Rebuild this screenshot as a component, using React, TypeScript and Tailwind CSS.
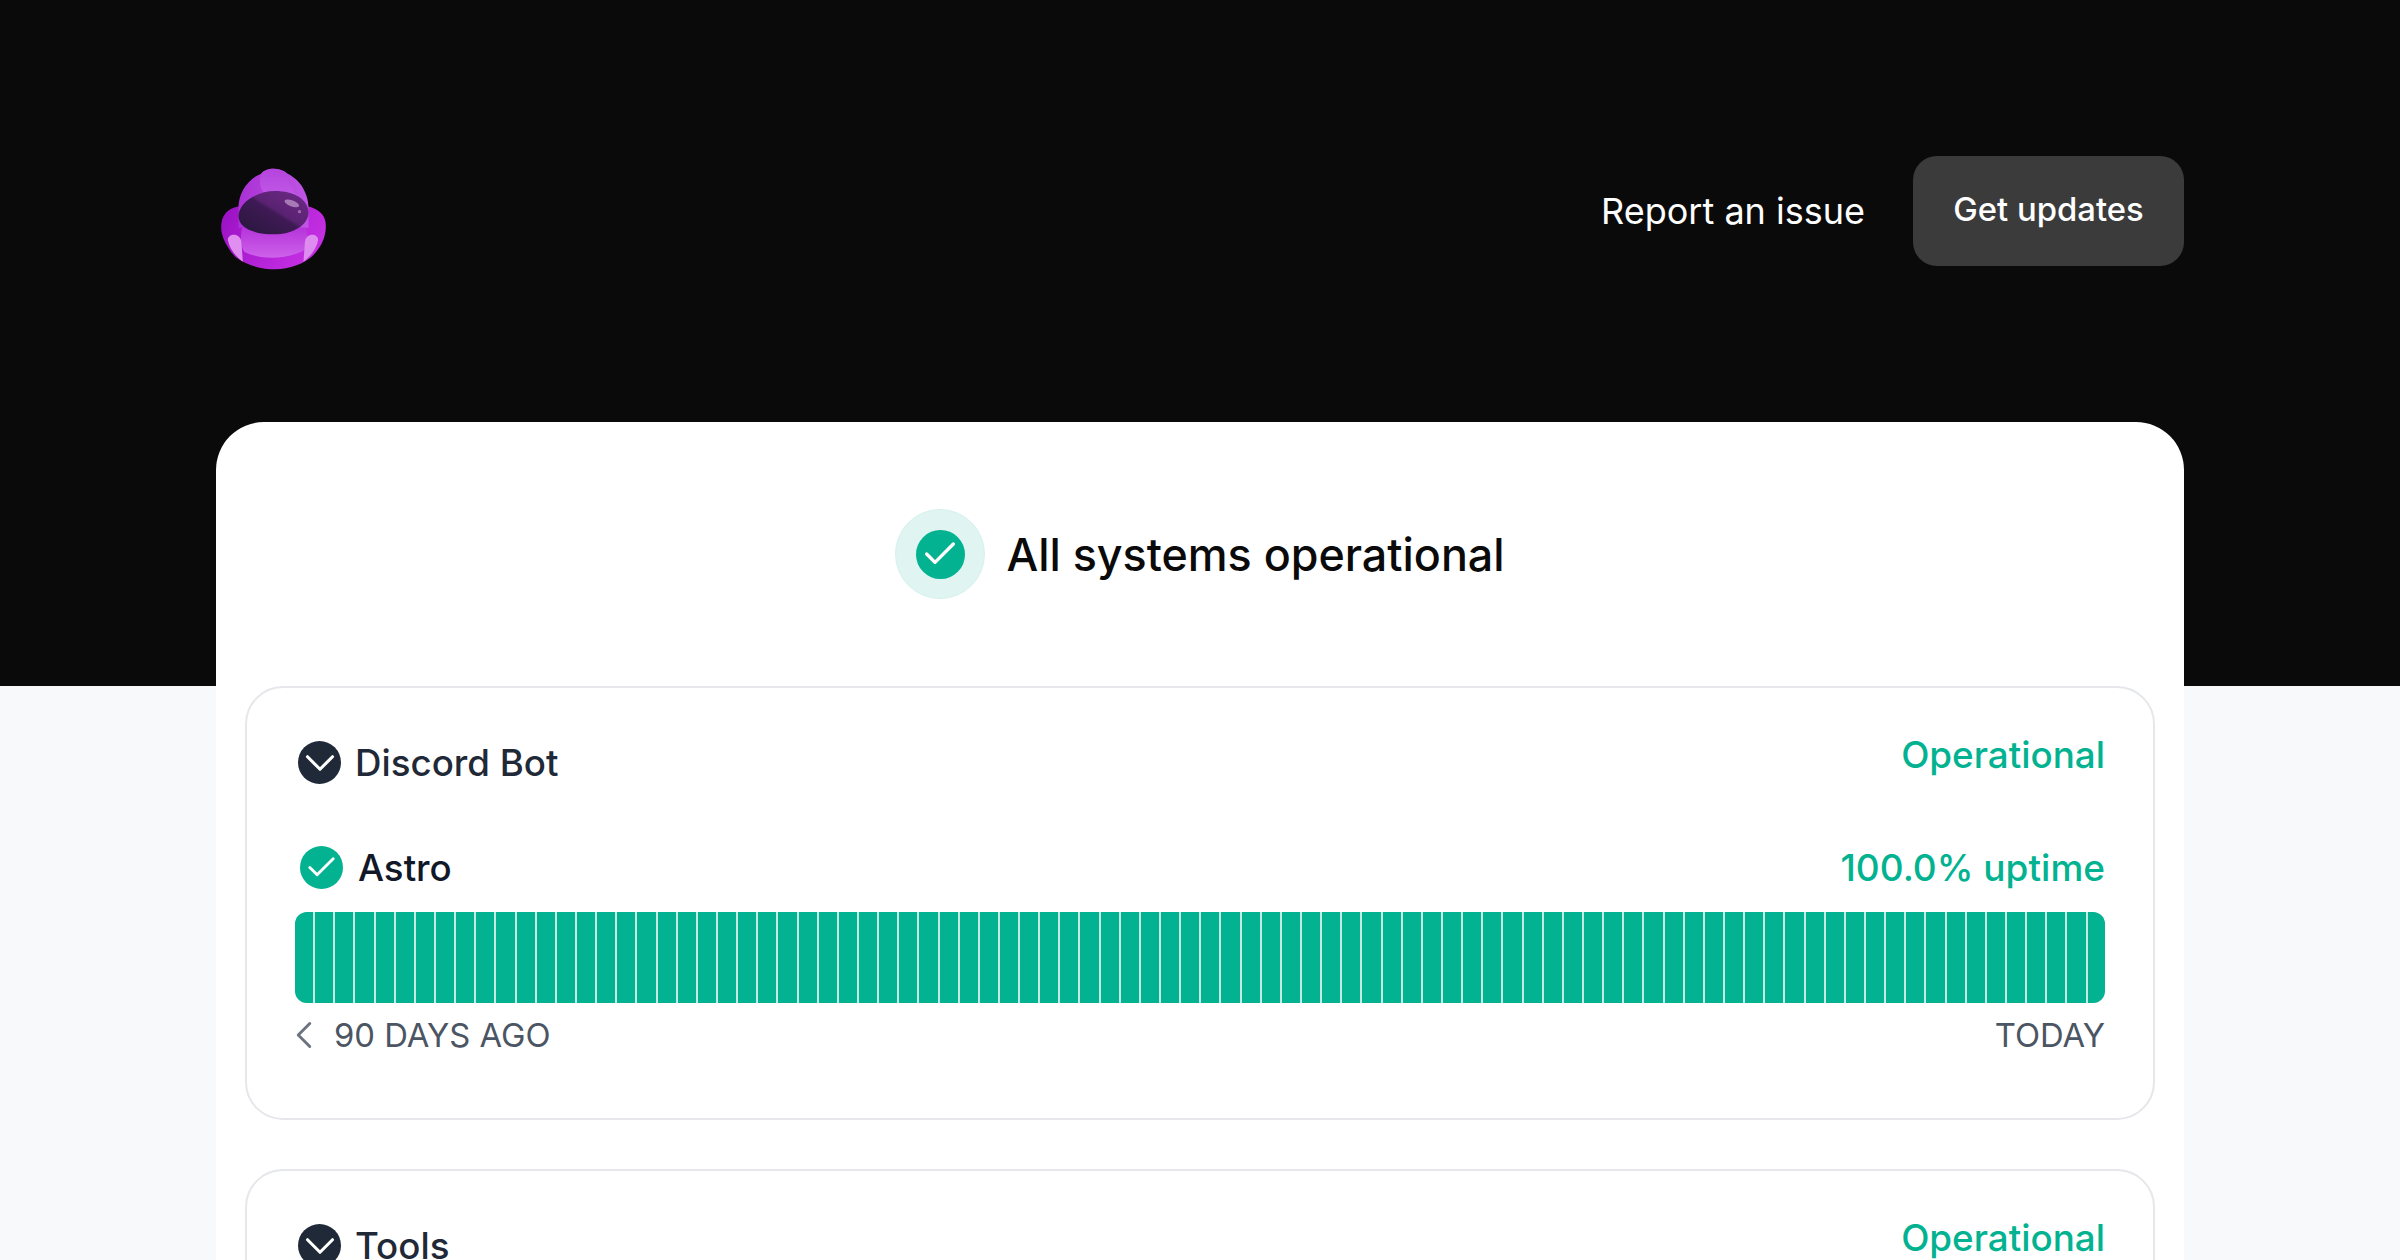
import { Check, ChevronDown, ChevronLeft } from "lucide-react";

const days = Array.from({ length: 90 }, (_, i) => i);

function Logo() {
  return (
    <svg width="107" height="105" viewBox="120 105 320 315" className="mt-[10px] ml-[4px]">
      <defs>
        <linearGradient id="body" x1="0" y1="0" x2="1" y2="0.4">
          <stop offset="0" stopColor="#9a10c4" />
          <stop offset="1" stopColor="#c52fe2" />
        </linearGradient>
        <linearGradient id="dome" x1="0" y1="0" x2="1" y2="0.1">
          <stop offset="0" stopColor="#a92fd4" />
          <stop offset="1" stopColor="#bf55e4" />
        </linearGradient>
        <linearGradient id="band" x1="0" y1="0" x2="0" y2="1">
          <stop offset="0" stopColor="#b534da" />
          <stop offset="1" stopColor="#cd62ea" />
        </linearGradient>
        <linearGradient id="visor" x1="0" y1="1" x2="1" y2="0">
          <stop offset="0" stopColor="#27163b" />
          <stop offset="0.5" stopColor="#3f1a55" />
          <stop offset="0.55" stopColor="#5a2272" />
          <stop offset="1" stopColor="#6e2a88" />
        </linearGradient>
        <linearGradient id="crown" x1="0" y1="0" x2="0" y2="1">
          <stop offset="0" stopColor="#b544de" />
          <stop offset="1" stopColor="#c058e6" />
        </linearGradient>
      </defs>
      <path d="M178 226C140 232 123 255 123 290C123 315 140 350 165 377C200 405 250 415 285 415C330 415 385 395 410 360C430 335 437 310 437 285C437 255 420 235 382 226Z" fill="url(#body)" />
      <path d="M175 240C172 190 200 145 243 128C258 108 300 108 322 128C360 145 388 190 385 240L385 290L175 290Z" fill="url(#dome)" />
      <path d="M243 128C258 108 300 108 322 128C322 150 335 175 352 195L252 186C240 170 236 150 243 128Z" fill="url(#crown)" />
      <path d="M186 290C178 320 184 350 192 362C240 388 325 385 372 358C386 335 385 310 376 290Z" fill="url(#band)" />
      <path d="M175 255C175 215 230 180 285 180C340 180 385 205 385 245C385 280 340 310 280 310C220 310 175 290 175 255Z" fill="url(#visor)" />
      <ellipse cx="335" cy="217" rx="23" ry="9" transform="rotate(20 335 217)" fill="#a87ab5" />
      <circle cx="358" cy="242" r="5" fill="#9a6aa8" />
      <path d="M143 328C143 305 182 305 184 335L188 392C165 376 148 352 143 328Z" fill="#e08ff0" />
      <path d="M414 328C414 305 376 305 374 335L370 392C392 376 409 352 414 328Z" fill="#de8cef" />
    </svg>
  );
}

function GroupHeader({ name }: { name: string }) {
  return (
    <div className="flex justify-between items-start">
      <div className="flex items-center gap-[14px] ml-[3px] mt-[5px]">
        <span className="w-[43px] h-[43px] rounded-full bg-[#1f2937] flex items-center justify-center shrink-0">
          <ChevronDown className="w-[50px] h-[50px] shrink-0 text-white" strokeWidth={1.5} />
        </span>
        <span className="text-[36.7px] leading-[43px] font-medium text-[#1f2937]">{name}</span>
      </div>
      <span className="text-[36.8px] leading-[43px] -mt-[3px] font-medium text-[#02b290]">Operational</span>
    </div>
  );
}

export default function App() {
  return (
    <div className="h-[1260px] overflow-hidden bg-[#f8f9fb] font-['Inter',sans-serif]">
      {/* Header */}
      <header className="h-[686px] bg-[#0a0a0a] px-[216px] pt-[156px]">
        <div className="flex justify-between items-start">
          <Logo />
          <div className="flex items-center gap-[48px]">
            <a className="text-[36px] text-white">Report an issue</a>
            <button className="h-[110px] w-[271px] rounded-[24px] bg-[#3b3b3b] text-white text-[32.8px] font-medium pb-[2px]">
              Get updates
            </button>
          </div>
        </div>
      </header>

      {/* Card */}
      <main className="mx-[216px] -mt-[264px] relative bg-white rounded-t-[48px] px-[29px] pt-[87px]">
        <div className="flex items-center justify-center gap-[21px]">
          <span className="w-[90px] h-[90px] rounded-full bg-[#e0f5f1] border border-[#d5f1ec] flex items-center justify-center">
            <span className="w-[49px] h-[49px] rounded-full bg-[#02b290] flex items-center justify-center">
              <Check className="w-[40px] h-[40px] shrink-0 text-white" strokeWidth={2} />
            </span>
          </span>
          <h1 className="text-[44.8px] font-medium text-[#0a0a0a] mt-[3px]">All systems operational</h1>
        </div>

        <section className="mt-[87px] h-[434px] border-2 border-[#e5e7eb] rounded-[38px] px-[48px] pt-[48px]">
          <GroupHeader name="Discord Bot" />
          <div className="flex justify-between items-center mt-[56px] pl-[5px]">
            <div className="flex items-center gap-[15px]">
              <span className="w-[43px] h-[43px] rounded-full bg-[#02b290] flex items-center justify-center shrink-0">
                <Check className="w-[35px] h-[35px] shrink-0 text-white" strokeWidth={2} />
              </span>
              <span className="text-[36.7px] font-medium text-[#111827]">Astro</span>
            </div>
            <span className="text-[37px] font-medium text-[#02b290]">100.0% uptime</span>
          </div>
          <div className="flex gap-[2px] h-[91px] mt-[16px] rounded-[12px] overflow-hidden bg-[#c4ebe3]">
            {days.map((d) => (
              <div key={d} className="flex-1 bg-[#02b290]" />
            ))}
          </div>
          <div className="flex justify-between items-center mt-[8px] text-[32.8px] text-[#4b5563]">
            <div className="flex items-center gap-[7px]">
              <ChevronLeft className="w-[46px] h-[46px] -ml-[14px] -my-[6px] shrink-0 text-[#6b7280]" strokeWidth={1.5} />
              <span>90 DAYS AGO</span>
            </div>
            <span>TODAY</span>
          </div>
        </section>

        <section className="mt-[49px] h-[300px] border-2 border-[#e5e7eb] rounded-[38px] px-[48px] pt-[48px]">
          <GroupHeader name="Tools" />
        </section>
      </main>
    </div>
  );
}
